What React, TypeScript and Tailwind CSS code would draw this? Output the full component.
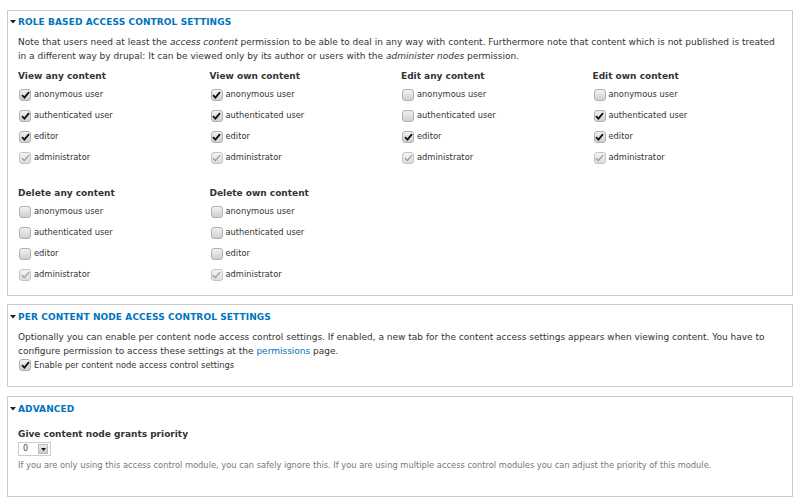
type Box = "on" | "off" | "locked";

const roles = ["anonymous user", "authenticated user", "editor", "administrator"];

const groups: { title: string; boxes: Box[] }[][] = [
  [
    { title: "View any content", boxes: ["on", "on", "on", "locked"] },
    { title: "View own content", boxes: ["on", "on", "on", "locked"] },
    { title: "Edit any content", boxes: ["off", "off", "on", "locked"] },
    { title: "Edit own content", boxes: ["off", "on", "on", "locked"] },
  ],
  [
    { title: "Delete any content", boxes: ["off", "off", "off", "locked"] },
    { title: "Delete own content", boxes: ["off", "off", "off", "locked"] },
  ],
];

function Check({ state }: { state: Box }) {
  return (
    <span
      className={
        "relative inline-flex h-[12px] w-[12px] shrink-0 items-center justify-center rounded-[3px] border " +
        (state === "locked"
          ? "border-[#c4c4c4] bg-gradient-to-b from-[#f4f4f4] to-[#dcdcdc]"
          : "border-[#b0b0b0] bg-gradient-to-b from-[#f2f2f2] to-[#cfcfcf]")
      }
    >
      {state !== "off" && (
        <svg width="9" height="8" viewBox="0 0 9 8">
          <path
            d="M1 4.2 L3.4 6.6 L8 1.2"
            fill="none"
            stroke={state === "on" ? "#111" : "#9a9a9a"}
            strokeWidth={state === "on" ? 1.8 : 1.3}
          />
        </svg>
      )}
    </span>
  );
}

function Legend({ children }: { children: string }) {
  return (
    <div className="flex h-[14px] items-center pl-[2px] text-[9px] font-bold uppercase leading-[14px] tracking-[0.1px] text-[#0074bd]">
      <svg width="6" height="4" viewBox="0 0 6 4" className="mr-[2px]">
        <path d="M0 0 L6 0 L3 3.5 Z" fill="#222" />
      </svg>
      {children}
    </div>
  );
}

export default function App() {
  return (
    <div className="min-h-screen bg-white px-[7px] pt-[10px] font-['DejaVu_Sans',sans-serif] text-[#333]">
      {/* role based */}
      <div className="border border-[#ccc] pt-[4px] pb-[10px]">
        <Legend>Role based access control settings</Legend>
        <div className="pl-[10px] pr-[8px]">
          <p className="mt-[6px] text-[9px] leading-[14px] whitespace-nowrap">
            Note that users need at least the <em>access content</em> permission to be able to deal in any way with
            content. Furthermore note that content which is not published is treated
            <br />
            in a different way by drupal: It can be viewed only by its author or users with the{" "}
            <em>administer nodes</em> permission.
          </p>
          {groups.map((row, gi) => (
            <div key={gi} className={"grid grid-cols-4 " + (gi === 0 ? "mt-[6px]" : "mt-[18px]")}>
              {row.map((col) => (
                <div key={col.title}>
                  <div className="mb-[1px] text-[9px] font-bold leading-[14px]">{col.title}</div>
                  {roles.map((r, i) => (
                    <div key={r} className="flex h-[21px] items-center gap-[3px] pl-[1px]">
                      <Check state={col.boxes[i]} />
                      <span className="text-[8.3px]">{r}</span>
                    </div>
                  ))}
                </div>
              ))}
            </div>
          ))}
        </div>
      </div>

      {/* per node */}
      <div className="mt-[8px] border border-[#ccc] pt-[5px] pb-[14px]">
        <Legend>Per content node access control settings</Legend>
        <div className="pl-[10px] pr-[8px]">
          <p className="mt-[6px] text-[9px] leading-[14px] whitespace-nowrap">
            Optionally you can enable per content node access control settings. If enabled, a new tab for the content
            access settings appears when viewing content. You have to
            <br />
            configure permission to access these settings at the{" "}
            <a className="text-[#0074bd]">permissions</a> page.
          </p>
          <div className="flex h-[14px] items-center gap-[3px] pl-[1px]">
            <Check state="on" />
            <span className="text-[8.3px]">Enable per content node access control settings</span>
          </div>
        </div>
      </div>

      {/* advanced */}
      <div className="mt-[9px] border border-[#ccc] pt-[5px] pb-[24px]">
        <Legend>Advanced</Legend>
        <div className="pl-[10px] pr-[8px]">
          <div className="mt-[11px] text-[9px] font-bold leading-[14px]">Give content node grants priority</div>
          <div className="mt-[1px] flex h-[14px] w-[33px] items-center justify-between border border-[#ccc] bg-white pl-[4px] pr-[2px]">
            <span className="text-[8px] text-[#444]">0</span>
            <span className="flex h-[10px] w-[10px] items-center justify-center border border-[#bbb] bg-gradient-to-b from-[#eee] to-[#c8c8c8]">
              <svg width="5" height="3" viewBox="0 0 5 3">
                <path d="M0 0 L5 0 L2.5 3 Z" fill="#111" />
              </svg>
            </span>
          </div>
          <p className="mt-[2px] text-[8.3px] leading-[14px] text-[#777] whitespace-nowrap">
            If you are only using this access control module, you can safely ignore this. If you are using multiple
            access control modules you can adjust the priority of this module.
          </p>
        </div>
      </div>
    </div>
  );
}
